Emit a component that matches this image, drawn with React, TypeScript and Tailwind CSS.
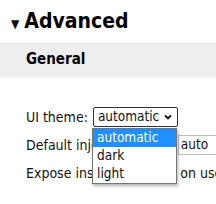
import React from "react";

export default function App() {
  return (
    <div
      className="relative w-[216px] h-[204px] overflow-hidden bg-white text-[#111]"
      style={{ fontFamily: '"DejaVu Sans Condensed", "DejaVu Sans", sans-serif', fontStretch: "condensed" }}
    >
      {/* section heading */}
      <div className="flex items-center h-[43px] pl-[11px]">
        <span className="text-[12px] leading-none mr-[5px] mt-[4px]">▼</span>
        <span className="text-[21px] font-bold leading-none text-black">Advanced</span>
      </div>

      {/* group bar */}
      <div className="h-[34px] bg-[#eeeeee] border-t border-[#e2e2e2] flex items-center pl-[26px]">
        <span className="text-[15px] font-bold leading-none text-black pb-[2px]">General</span>
      </div>

      {/* settings */}
      <div className="pt-[30px] pl-[26px] flex flex-col text-[14px] leading-none">
        <div className="flex items-center h-[20px] gap-[5px]">
          <span>UI theme:</span>
          <div className="flex items-center justify-between w-[85px] h-[20px] border border-[#333] rounded-[2px] pl-[4px] pr-[4px] text-[13.5px]">
            <span>automatic</span>
            <svg width="8" height="6" viewBox="0 0 8 6" className="mr-[1px]">
              <path d="M1 1.5 L4 4.5 L7 1.5" fill="none" stroke="#111" strokeWidth="1.8" />
            </svg>
          </div>
        </div>

        <div className="flex items-center h-[20px] gap-[4px] mt-[8px]">
          <span className="whitespace-nowrap">Default injection mode:</span>
          <div className="shrink-0 w-[80px] h-[20px] border border-[#bdbdbd] pl-[2px] flex items-center text-[13.5px]">
            auto
          </div>
        </div>

        <div className="flex items-center h-[20px] mt-[8px] whitespace-nowrap">
          <span>Expose instrumentation on use</span>
        </div>
      </div>

      {/* open dropdown */}
      <div className="absolute left-[92px] top-[128px] w-[85px] border border-[#767676] bg-white shadow-[1px_2px_3px_rgba(0,0,0,0.3)] text-[13.5px] leading-none">
        <div className="h-[18px] flex items-center pl-[4px] bg-[#1e90ff] text-white">automatic</div>
        <div className="h-[18px] flex items-center pl-[4px]">dark</div>
        <div className="h-[18px] flex items-center pl-[4px]">light</div>
      </div>
    </div>
  );
}
